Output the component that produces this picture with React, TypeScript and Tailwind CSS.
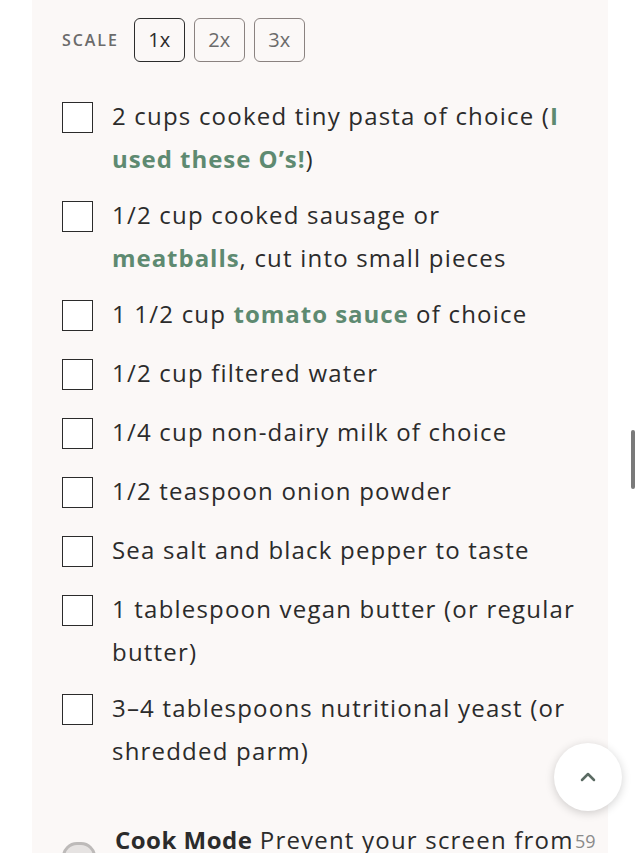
import { ChevronUp } from 'lucide-react';

type Part = { t: string; link?: boolean };

const ingredients: Part[][] = [
  [{ t: '2 cups cooked tiny pasta of choice (' }, { t: 'I used these O’s!', link: true }, { t: ')' }],
  [{ t: '1/2 cup cooked sausage or ' }, { t: 'meatballs', link: true }, { t: ', cut into small pieces' }],
  [{ t: '1 1/2 cup ' }, { t: 'tomato sauce', link: true }, { t: ' of choice' }],
  [{ t: '1/2 cup filtered water' }],
  [{ t: '1/4 cup non-dairy milk of choice' }],
  [{ t: '1/2 teaspoon onion powder' }],
  [{ t: 'Sea salt and black pepper to taste' }],
  [{ t: '1 tablespoon vegan butter (or regular butter)' }],
  [{ t: '3–4 tablespoons nutritional yeast (or shredded parm)' }],
];

export default function App() {
  return (
    <div className="relative h-[853px] overflow-hidden bg-white font-['Open_Sans',sans-serif] text-[#2b2b2b]">
      <div className="mx-8 h-full bg-[#fbf8f7] pl-[30px] pr-[30px]">
        {/* Scale */}
        <div className="flex items-center gap-[9px] pt-[18px]">
          <span className="mr-[6px] text-[16px] font-semibold tracking-[0.12em] text-[#6b6b6b]">SCALE</span>
          <button className="h-[44px] w-[51px] rounded-[6px] border-[1.5px] border-[#2b2b2b] text-[20px] text-[#2b2b2b]">1x</button>
          <button className="h-[44px] w-[51px] rounded-[6px] border-[1.5px] border-[#8a8280] text-[20px] text-[#6b6b6b]">2x</button>
          <button className="h-[44px] w-[51px] rounded-[6px] border-[1.5px] border-[#8a8280] text-[20px] text-[#6b6b6b]">3x</button>
        </div>

        {/* Ingredients */}
        <ul className="mt-[32px] space-y-[13px]">
          {ingredients.map((parts, i) => (
            <li key={i} className="flex items-start gap-[19px]">
              <span className="mb-[7px] mt-2 h-[31px] w-[31px] shrink-0 border-[1.5px] border-[#2b2b2b] bg-white" />
              <p className="text-[24px] leading-[43px] tracking-[0.05em]">
                {parts.map((p, j) =>
                  p.link ? (
                    <span key={j} className="font-bold tracking-[0.04em] text-[#5e8a71]">{p.t}</span>
                  ) : (
                    <span key={j}>{p.t}</span>
                  )
                )}
              </p>
            </li>
          ))}
        </ul>

        {/* Cook mode */}
        <div className="mt-[46px] flex items-start gap-[19px]">
          <span className="mt-[24px] h-[30px] w-[34px] shrink-0 rounded-full border-[3px] border-[#bdbab9] bg-[#e6e3e2]" />
          <p className="text-[24px] leading-[43px] tracking-[0.05em]">
            <span className="font-bold tracking-[0.02em]">Cook Mode</span> Prevent your screen from going dark
          </p>
        </div>
      </div>

      <span className="absolute left-[575px] top-[828px] text-[18px] text-[#8a8a8a]">59</span>

      {/* Scroll to top */}
      <button className="absolute left-[554px] top-[743px] flex h-[68px] w-[68px] items-center justify-center rounded-full bg-white shadow-[0_2px_10px_rgba(0,0,0,0.18)]">
        <ChevronUp className="h-[24px] w-[24px] text-[#5b6b63]" strokeWidth={2.5} />
      </button>

      {/* Scrollbar */}
      <span className="absolute left-[631px] top-[430px] h-[59px] w-[4px] rounded-full bg-[#7a7a7a]" />
    </div>
  );
}
